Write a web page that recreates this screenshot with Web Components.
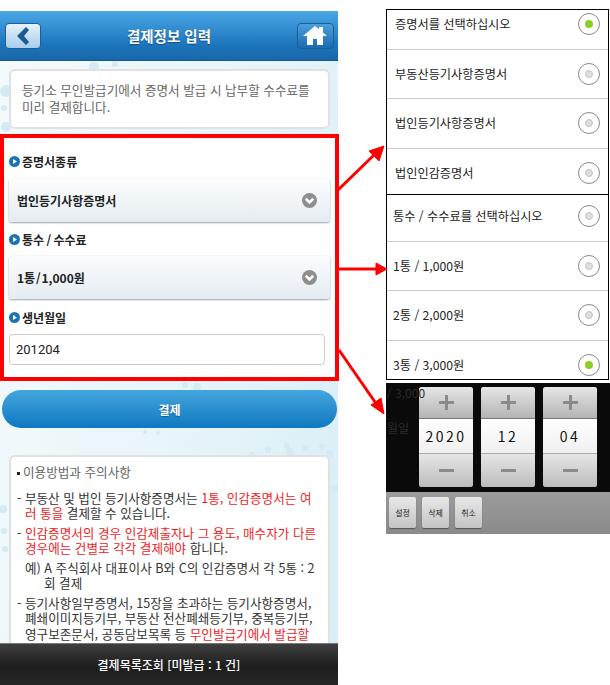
<!DOCTYPE html>
<html lang="ko">
<head>
<meta charset="utf-8">
<title>결제정보 입력</title>
<style>
  html, body { margin: 0; padding: 0; background: #fff; }
  body {
    width: 610px;
    height: 685px;
    overflow: hidden;
    position: relative;
    display: flex;
    font-family: "Noto Sans CJK KR", "Noto Sans", sans-serif;
  }
</style>
</head>
<body>
  <pay-screen></pay-screen>
  <side-panels>
    <radio-list style="--scroll:-10px">
      <radio-row checked>증명서를 선택하십시오</radio-row>
      <radio-row>부동산등기사항증명서</radio-row>
      <radio-row>법인등기사항증명서</radio-row>
      <radio-row>법인인감증명서</radio-row>
    </radio-list>
    <radio-list style="--scroll:-3px;--pad:6px;margin-top:-1px">
      <radio-row>통수 / 수수료를 선택하십시오</radio-row>
      <radio-row>1통 / 1,000원</radio-row>
      <radio-row>2통 / 2,000원</radio-row>
      <radio-row checked>3통 / 3,000원</radio-row>
    </radio-list>
    <date-picker></date-picker>
  </side-panels>
  <arrow-overlay></arrow-overlay>

<script>
class AppHeader extends HTMLElement {
  connectedCallback() {
    this.attachShadow({ mode: "open" }).innerHTML = `
      <style>
        :host {
          display: flex;
          align-items: center;
          justify-content: space-between;
          height: 50px;
          padding: 0 4px 0 5px;
          box-sizing: border-box;
          flex: none;
          background: linear-gradient(#4aa8e6, #1c74bb 70%, #1a66a8);
          border-bottom: 1px solid #16588f;
        }
        .btn {
          width: 36px;
          height: 26px;
          box-sizing: border-box;
          border: 1px solid #1d5f95;
          border-radius: 4px;
          display: flex;
          align-items: center;
          justify-content: center;
        }
        .back { background: linear-gradient(#e6f1fa, #a9cdea); }
        .home { background: linear-gradient(#4b9fdd, #1c6cb0); width: 37px; }
        h1 {
          margin: 0;
          font-size: 14.5px;
          font-weight: 700;
          color: #fff;
          text-shadow: 0 1px 1px #124f82;
        }
      </style>
      <div class="btn back">
        <svg width="14" height="18" viewBox="0 0 14 18"><path d="M10 0 1 9l9 9 3-3-5-6 5-6z" fill="#1c5a94"/></svg>
      </div>
      <h1>결제정보 입력</h1>
      <div class="btn home">
        <svg width="24" height="19" viewBox="0 0 24 19"><path d="M12 0 0 10h4v9h6v-6h4v6h6v-9h4l-4-3.4V1h-4v2.2z" fill="#fff"/></svg>
      </div>`;
  }
}

class FieldLabel extends HTMLElement {
  connectedCallback() {
    this.attachShadow({ mode: "open" }).innerHTML = `
      <style>
        :host {
          display: flex;
          align-items: center;
          gap: 2px;
          height: 18px;
          font-size: 12px;
          font-weight: 700;
          color: #222;
          word-spacing: -1px;
        }
        svg { flex: none; }
      </style>
      <svg width="11" height="11" viewBox="0 0 11 11"><circle cx="5.5" cy="5.5" r="5.5" fill="#1c74b8"/><path d="M4 3v5l4-2.5z" fill="#fff"/></svg>
      <slot></slot>`;
  }
}

class SelectBox extends HTMLElement {
  connectedCallback() {
    this.attachShadow({ mode: "open" }).innerHTML = `
      <style>
        :host {
          display: flex;
          align-items: center;
          justify-content: space-between;
          height: 43px;
          padding: 0 13px 0 8px;
          box-sizing: border-box;
          border-radius: 3px;
          background: linear-gradient(#fbfdfe, #e4ecf2);
          box-shadow: 0 1px 2px #9aa5ad, 0 0 1px #c3ccd2;
          font-size: 12px;
          font-weight: 700;
          color: #222;
          word-spacing: -2.5px;
        }
      </style>
      <slot></slot>
      <svg width="15" height="15" viewBox="0 0 15 15"><circle cx="7.5" cy="7.5" r="7.5" fill="#8e8e8e"/><path d="M3.8 5.8 7.5 9.4l3.7-3.6" fill="none" stroke="#fff" stroke-width="2.6"/></svg>`;
  }
}

class TextField extends HTMLElement {
  connectedCallback() {
    this.attachShadow({ mode: "open" }).innerHTML = `
      <style>
        :host {
          display: flex;
          align-items: center;
          width: 316px;
          height: 31px;
          padding-left: 6px;
          box-sizing: border-box;
          border: 1px solid #cdcdcd;
          border-radius: 4px;
          background: #fff;
          font-family: Roboto, sans-serif;
          font-size: 13px;
          color: #222;
        }
      </style>
      <slot></slot>`;
  }
}

class PayForm extends HTMLElement {
  connectedCallback() {
    this.attachShadow({ mode: "open" }).innerHTML = `
      <style>
        :host {
          display: flex;
          flex-direction: column;
          height: 247px;
          box-sizing: border-box;
          border: 4px solid #ff0000;
          background: #fff;
          padding: 14px 5px 0 5px;
          margin: 5px -1px 0 0;
          flex: none;
        }
        field-label { margin-bottom: 9px; }
        select-box { margin-bottom: 8px; }
        .l2 { margin-bottom: 8px; }
        .l3 { margin-bottom: 8px; margin-top: 1px; }
      </style>
      <field-label>증명서종류</field-label>
      <select-box>법인등기사항증명서</select-box>
      <field-label class="l2">통수 / 수수료</field-label>
      <select-box>1통 / 1,000원</select-box>
      <field-label class="l3">생년월일</field-label>
      <text-field>201204</text-field>`;
  }
}

class PayButton extends HTMLElement {
  connectedCallback() {
    this.attachShadow({ mode: "open" }).innerHTML = `
      <style>
        :host {
          display: flex;
          align-items: center;
          justify-content: center;
          height: 38px;
          margin: 9px 1px 0 2px;
          border-radius: 19px;
          background: linear-gradient(#45a6de, #0f78c0);
          color: #fff;
          font-size: 12px;
          font-weight: 700;
          text-shadow: 0 1px 1px #0d5c94;
          flex: none;
        }
      </style>
      <slot></slot>`;
  }
}

class InfoCard extends HTMLElement {
  connectedCallback() {
    this.attachShadow({ mode: "open" }).innerHTML = `
      <style>
        :host {
          display: block;
          margin: 0 8px 0 9px;
          box-sizing: border-box;
          border: 2px solid #e1e1e1;
          border-radius: 6px;
          background: #fff;
          flex: none;
        }
      </style>
      <slot></slot>`;
  }
}

class NotesBlock extends HTMLElement {
  connectedCallback() {
    this.attachShadow({ mode: "open" }).innerHTML = `
      <style>
        :host {
          display: block;
          padding: 7px 0 0 6px;
          font-size: 12.6px;
          line-height: 15.5px;
          color: #333;
          white-space: nowrap;
        }
        h2 {
          margin: 0 0 10px;
          font-size: 12.6px;
          line-height: 15.5px;
          font-weight: 400;
          color: #666;
          display: flex;
          align-items: center;
          gap: 2px;
        }
        h2 i { width: 3px; height: 3px; background: #222; margin: 4px 1px 0 0; }
        p { margin: 0 0 4px; padding-left: 8px; text-indent: -8px; }
        p.ex { padding-left: 27px; text-indent: -19px; }
        b { font-weight: 400; color: #f01c24; }
      </style>
      <h2><i></i>이용방법과 주의사항</h2>
      <p>- 부동산 및 법인 등기사항증명서는 <b>1통, 인감증명서는 여<br>러 통을</b> 결제할 수 있습니다.</p>
      <p>- <b>인감증명서의 경우 인감제출자나 그 용도, 매수자가 다른<br>경우에는 건별로 각각 결제해야</b> 합니다.</p>
      <p class="ex">예) A 주식회사 대표이사 B와 C의 인감증명서 각 5통 : 2<br>회 결제</p>
      <p>- 등기사항일부증명서, 15장을 초과하는 등기사항증명서,<br>폐쇄이미지등기부, 부동산 전산폐쇄등기부, 중복등기부,<br>영구보존문서, 공동담보목록 등 <b>무인발급기에서 발급할</b></p>`;
  }
}

class BottomBar extends HTMLElement {
  connectedCallback() {
    this.attachShadow({ mode: "open" }).innerHTML = `
      <style>
        :host {
          display: flex;
          align-items: center;
          justify-content: center;
          height: 42px;
          flex: none;
          position: relative;
          background: linear-gradient(#3f3f3f, #1e1e1e 55%, #262626);
          border-top: 1px solid #777;
          box-sizing: border-box;
          color: #fff;
          font-size: 12px;
          font-weight: 500;
        }
      </style>
      <slot></slot>`;
  }
}

class PayScreen extends HTMLElement {
  connectedCallback() {
    this.attachShadow({ mode: "open" }).innerHTML = `
      <style>
        :host {
          display: flex;
          flex-direction: column;
          flex: none;
          width: 338px;
          height: 674px;
          margin-top: 11px;
        }
        main {
          flex: 1;
          min-height: 0;
          display: flex;
          flex-direction: column;
          padding-top: 8px;
          background: linear-gradient(100deg, #f4fafc, #e6f4f9 60%, #d9eef6);
          position: relative;
        }
        .dots { position: absolute; inset: 0; width: 338px; height: 582px; }
        .top {
          height: 56px;
          box-sizing: border-box;
          padding: 10px 14px 0 11px;
          font-size: 12.6px;
          line-height: 17px;
          color: #666;
        }
        pay-form, pay-button, info-card { position: relative; }
        .rules { margin-top: 27px; height: 240px; }
      </style>
      <app-header></app-header>
      <main>
        <svg class="dots" viewBox="0 0 338 582" fill="#d3ebf4">
          <circle cx="6" cy="30" r="6"/><circle cx="4" cy="47" r="3"/><circle cx="6" cy="66" r="5"/>
          <circle cx="94" cy="6" r="5"/><circle cx="115" cy="3" r="3"/>
          <circle cx="185" cy="324" r="3"/><circle cx="197" cy="326" r="4"/>
          <circle cx="145" cy="371" r="2"/><circle cx="158" cy="372" r="2"/>
          <circle cx="268" cy="389" r="3"/><circle cx="287" cy="385" r="3"/><circle cx="305" cy="387" r="3"/><circle cx="322" cy="386" r="3"/>
          <circle cx="252" cy="394" r="3"/><circle cx="290" cy="391" r="4"/><circle cx="330" cy="393" r="4"/>
          <circle cx="335" cy="428" r="4"/><circle cx="3" cy="448" r="4"/><circle cx="4" cy="470" r="3"/><circle cx="5" cy="488" r="3"/>
        </svg>
        <info-card><div class="top">등기소 무인발급기에서 증명서 발급 시 납부할 수수료를<br>미리 결제합니다.</div></info-card>
        <pay-form></pay-form>
        <pay-button>결제</pay-button>
        <info-card class="rules"><notes-block></notes-block></info-card>
      </main>
      <bottom-bar>결제목록조회 [미발급 : 1 건]</bottom-bar>`;
  }
}

class RadioRow extends HTMLElement {
  connectedCallback() {
    const on = this.hasAttribute("checked");
    this.attachShadow({ mode: "open" }).innerHTML = `
      <style>
        :host {
          display: flex;
          align-items: center;
          justify-content: space-between;
          flex: none;
          height: 49.5px;
          box-sizing: border-box;
          padding: 0 8px 0 var(--pad, 8px);
          font-size: 12.2px;
          color: #222;
          border-bottom: 1px solid #cfcfcf;
        }
        :host(:last-child) { border-bottom: 0; }
        :host(:first-child) { margin-top: var(--scroll, 0); }
        .dot {
          width: 22px;
          height: 22px;
          box-sizing: border-box;
          border: 1px solid #8a8a8a;
          border-radius: 50%;
          display: flex;
          align-items: center;
          justify-content: center;
          background: #fff;
          flex: none;
        }
        .dot i {
          width: 8px;
          height: 8px;
          border-radius: 50%;
          background: ${on ? "#8ad022" : "#dedede"};
          ${on ? "" : "border: 1px solid #c4c4c4; box-sizing: border-box;"}
        }
      </style>
      <slot></slot>
      <span class="dot"><i></i></span>`;
  }
}

class RadioList extends HTMLElement {
  connectedCallback() {
    this.attachShadow({ mode: "open" }).innerHTML = `
      <style>
        :host {
          display: flex;
          flex-direction: column;
          width: 223px;
          height: 186px;
          overflow: hidden;
          box-sizing: border-box;
          border: 1px solid #000;
          background: #fff;
          flex: none;
        }
      </style>
      <slot></slot>`;
  }
}

class DateSpinner extends HTMLElement {
  connectedCallback() {
    this.attachShadow({ mode: "open" }).innerHTML = `
      <style>
        :host {
          display: flex;
          flex-direction: column;
          width: 54px;
          height: 100px;
          border-radius: 3px;
          overflow: hidden;
          background: #ccc;
        }
        .btn {
          height: 31px;
          flex: none;
          display: flex;
          align-items: center;
          justify-content: center;
          background: linear-gradient(#e6e6e6, #b4b4b4);
        }
        .btn.minus { background: linear-gradient(#e6e6e6, #bcbcbc); height: 33px; }
        .val {
          flex: 1;
          display: flex;
          align-items: center;
          justify-content: center;
          background: linear-gradient(#fff, #f0f0f0);
          border-top: 1px solid #777;
          border-bottom: 1px solid #aaa;
          font-size: 14px;
          color: #111;
          letter-spacing: 2.5px;
        }
      </style>
      <div class="btn"><svg width="15" height="15" viewBox="0 0 15 15"><path d="M6 0h3v6h6v3H9v6H6V9H0V6h6z" fill="#8b8b8b"/></svg></div>
      <div class="val"><slot></slot></div>
      <div class="btn minus"><svg width="15" height="3" viewBox="0 0 15 3"><rect width="15" height="3" fill="#8b8b8b"/></svg></div>`;
  }
}

class DatePicker extends HTMLElement {
  connectedCallback() {
    this.attachShadow({ mode: "open" }).innerHTML = `
      <style>
        :host {
          display: flex;
          flex-direction: column;
          height: 151px;
          margin-top: 3px;
          flex: none;
        }
        .wheels {
          height: 109px;
          flex: none;
          box-sizing: border-box;
          background: #0a0a0a;
          display: flex;
          gap: 8px;
          padding: 4px 0 0 33px;
          position: relative;
        }
        .ghost {
          position: absolute;
          left: 1px;
          font-size: 12px;
          color: #2c2c2c;
          white-space: nowrap;
        }
        .actions {
          flex: 1;
          background: linear-gradient(#9c9c9c, #8a8a8a);
          display: flex;
          gap: 6px;
          padding: 5px 0 0 3px;
        }
        .actions span {
          width: 27px;
          height: 31px;
          display: flex;
          align-items: center;
          justify-content: center;
          font-size: 8px;
          color: #222;
          border-radius: 2px;
          background: linear-gradient(#e8e8e8, #c4c4c4);
          box-shadow: 0 1px 1px #555;
        }
      </style>
      <div class="wheels">
        <span class="ghost" style="top:1px">/ 3,000</span>
        <span class="ghost" style="top:36px">월일</span>
        <date-spinner>2020</date-spinner>
        <date-spinner>12</date-spinner>
        <date-spinner>04</date-spinner>
      </div>
      <div class="actions"><span>설정</span><span>삭제</span><span>취소</span></div>`;
  }
}

class SidePanels extends HTMLElement {
  connectedCallback() {
    this.attachShadow({ mode: "open" }).innerHTML = `
      <style>
        :host {
          display: flex;
          flex-direction: column;
          width: 224px;
          margin: 9px 0 0 48px;
          flex: none;
        }
      </style>
      <slot></slot>`;
  }
}

class ArrowOverlay extends HTMLElement {
  connectedCallback() {
    this.attachShadow({ mode: "open" }).innerHTML = `
      <style>
        :host { position: absolute; inset: 0; pointer-events: none; }
        svg { display: block; }
      </style>
      <svg width="610" height="685" viewBox="0 0 610 685" fill="#ff0000" stroke="#ff0000">
        <path d="M338 190 374 155" fill="none" stroke-width="3"/>
        <path d="M384 146 379 161 369 151z"/>
        <path d="M339 269H376" fill="none" stroke-width="3"/>
        <path d="M387 269 376 263V275z"/>
        <path d="M339 350 375 402" fill="none" stroke-width="3"/>
        <path d="M384 414 371 405 381 398z"/>
      </svg>`;
  }
}

const elements = {
  "app-header": AppHeader,
  "field-label": FieldLabel,
  "select-box": SelectBox,
  "text-field": TextField,
  "pay-form": PayForm,
  "pay-button": PayButton,
  "info-card": InfoCard,
  "notes-block": NotesBlock,
  "bottom-bar": BottomBar,
  "pay-screen": PayScreen,
  "radio-row": RadioRow,
  "radio-list": RadioList,
  "date-spinner": DateSpinner,
  "date-picker": DatePicker,
  "side-panels": SidePanels,
  "arrow-overlay": ArrowOverlay,
};
Object.entries(elements).forEach(([name, cls]) => customElements.define(name, cls));
</script>
</body>
</html>
